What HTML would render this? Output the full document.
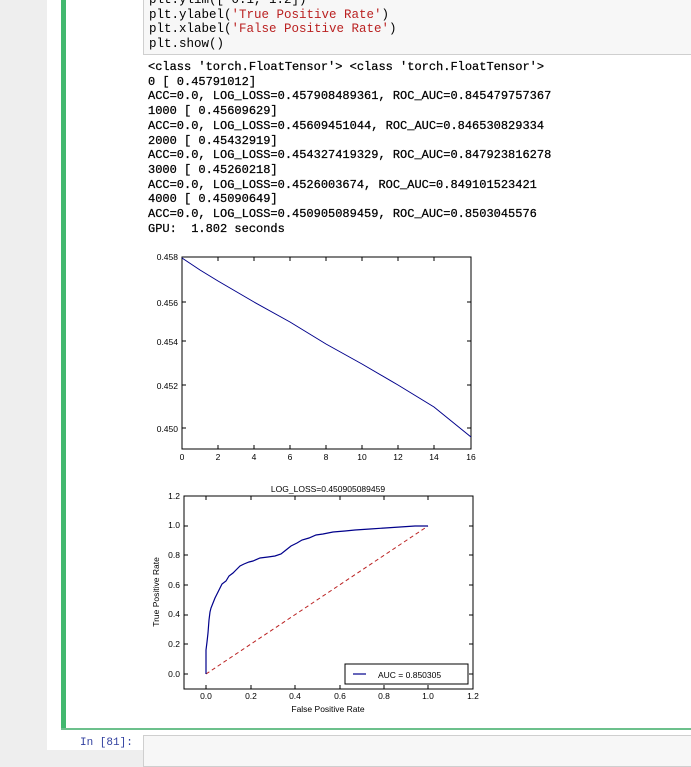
<!DOCTYPE html>
<html><head><style>
body{margin:0;width:691px;height:750px;background:#eee;position:relative;overflow:hidden;font-family:"Liberation Mono",monospace}
#nb{position:absolute;left:47px;top:0;width:644px;height:750px;background:#fff}
#green{position:absolute;left:61px;top:0;width:5px;height:730px;background:#42b86f}
#gline{position:absolute;left:61px;top:728px;width:630px;height:2px;background:#6cc08c}
#code{position:absolute;left:143px;top:-10px;width:560px;height:65px;background:#f7f7f7;border:1px solid #cfcfcf;font-size:12.5px;line-height:14.5px;padding:2px 0 0 5px;box-sizing:border-box;color:#000}
.s{color:#ba2121}
#out{position:absolute;left:148px;top:60px;font-size:12px;line-height:14.7px;white-space:pre;color:#000;-webkit-text-stroke:0.25px #000}
#in{position:absolute;left:80px;top:737px;font-size:11px;color:#303f9f}
#inbox{position:absolute;left:143px;top:735px;width:560px;height:30px;background:#f7f7f7;border:1px solid #cfcfcf}
svg{position:absolute;left:0;top:0}
svg text{font-family:"Liberation Sans",sans-serif;font-size:8.5px;fill:#000}
</style></head><body>
<div id="nb"></div>
<div id="green"></div><div id="gline"></div>
<div id="code">plt.ylim([-0.1, 1.2])<br>plt.ylabel(<span class="s">'True Positive Rate'</span>)<br>plt.xlabel(<span class="s">'False Positive Rate'</span>)<br>plt.show()</div>
<div id="out">&lt;class 'torch.FloatTensor'&gt; &lt;class 'torch.FloatTensor'&gt;
0 [ 0.45791012]
ACC=0.0, LOG_LOSS=0.457908489361, ROC_AUC=0.845479757367
1000 [ 0.45609629]
ACC=0.0, LOG_LOSS=0.45609451044, ROC_AUC=0.846530829334
2000 [ 0.45432919]
ACC=0.0, LOG_LOSS=0.454327419329, ROC_AUC=0.847923816278
3000 [ 0.45260218]
ACC=0.0, LOG_LOSS=0.4526003674, ROC_AUC=0.849101523421
4000 [ 0.45090649]
ACC=0.0, LOG_LOSS=0.450905089459, ROC_AUC=0.8503045576
GPU:  1.802 seconds</div>
<div id="inbox"></div><div id="in">In [81]:</div>
<svg width="691" height="750">
<rect x="182" y="257" width="289" height="192" fill="#fff" stroke="#000" stroke-width="1"/>
<g stroke="#000">
<path d="M218 449v-4M254 449v-4M290 449v-4M326 449v-4M362 449v-4M398 449v-4M434 449v-4M218 257v4M254 257v4M290 257v4M326 257v4M362 257v4M398 257v4M434 257v4M182 302h4M182 341h4M182 385h4M182 428h4M471 302h-4M471 341h-4M471 385h-4M471 428h-4"/>
<path d="M206 689v-4M251 689v-4M295 689v-4M340 689v-4M384 689v-4M428 689v-4M206 496v4M251 496v4M295 496v4M340 496v4M384 496v4M428 496v4M184 526h4M184 555h4M184 585h4M184 615h4M184 644h4M184 674h4M473 526h-4M473 555h-4M473 585h-4M473 615h-4M473 644h-4M473 674h-4"/>
</g>
<path d="M182 258 L200 270 L218 281 L254 302 L290 322 L326 344 L362 364 L398 385 L434 407 L471 437" fill="none" stroke="#00008b" stroke-width="1"/>
<g text-anchor="end">
<text x="178" y="260">0.458</text><text x="178" y="306">0.456</text><text x="178" y="345">0.454</text><text x="178" y="389">0.452</text><text x="178" y="432">0.450</text></g>
<g text-anchor="middle">
<text x="182" y="460">0</text><text x="218" y="460">2</text><text x="254" y="460">4</text><text x="290" y="460">6</text><text x="326" y="460">8</text><text x="362" y="460">10</text><text x="398" y="460">12</text><text x="434" y="460">14</text><text x="471" y="460">16</text></g>

<rect x="184" y="496" width="289" height="193" fill="none" stroke="#000" stroke-width="1"/>
<text x="328" y="492" text-anchor="middle" font-size="9.5">LOG_LOSS=0.450905089459</text>
<line x1="206" y1="674" x2="428" y2="526" stroke="#b22" stroke-dasharray="4,3"/>
<path d="M206 674 L206 650 L207 642 L208 633 L209 620 L210 612 L211 608 L213 603 L215 598 L218 592 L220 588 L222 584 L226 581 L229 576 L233 573 L236 570 L240 566 L244 564 L249 562 L253 561 L260 558 L268 557 L275 556 L281 554 L286 550 L291 546 L297 543 L302 540 L309 538 L316 535 L323 534 L333 532 L345 531 L355 530 L370 529 L385 528 L400 527 L415 526 L428 526" fill="none" stroke="#00008b" stroke-width="1.2"/>
<g text-anchor="end">
<text x="180" y="499">1.2</text><text x="180" y="528">1.0</text><text x="180" y="558">0.8</text><text x="180" y="588">0.6</text><text x="180" y="617">0.4</text><text x="180" y="647">0.2</text><text x="180" y="677">0.0</text></g>
<g text-anchor="middle">
<text x="206" y="699">0.0</text><text x="251" y="699">0.2</text><text x="295" y="699">0.4</text><text x="340" y="699">0.6</text><text x="384" y="699">0.8</text><text x="428" y="699">1.0</text><text x="473" y="699">1.2</text>
<text x="328" y="712">False Positive Rate</text></g>
<text transform="translate(159,592) rotate(-90)" text-anchor="middle">True Positive Rate</text>
<rect x="345" y="664" width="123" height="20" fill="#fff" stroke="#000"/>
<line x1="353" y1="674" x2="366" y2="674" stroke="#00008b" stroke-width="1.2"/>
<text x="378" y="678" font-size="10">AUC = 0.850305</text>
</svg>
</body></html>
